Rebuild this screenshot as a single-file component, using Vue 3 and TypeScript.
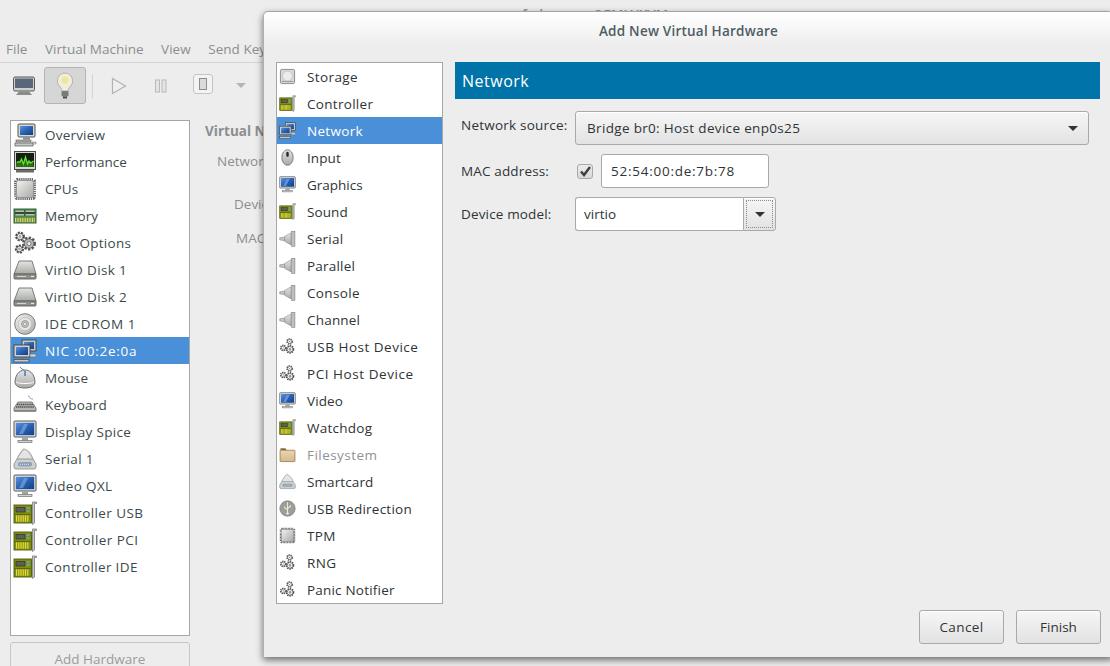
<script setup lang="ts">
interface Row { label: string; icon: string; selected?: boolean; disabled?: boolean; sp?: number }

const mainRows: Row[] = [
  { label: 'Overview', icon: 'pc', sp: 0.2 },
  { label: 'Performance', icon: 'perf', sp: 0 },
  { label: 'CPUs', icon: 'chip' },
  { label: 'Memory', icon: 'ram' },
  { label: 'Boot Options', icon: 'gears', sp: 0.25 },
  { label: 'VirtIO Disk 1', icon: 'disk', sp: 0.35 },
  { label: 'VirtIO Disk 2', icon: 'disk', sp: 0.35 },
  { label: 'IDE CDROM 1', icon: 'cd', sp: 0.55 },
  { label: 'NIC :00:2e:0a', icon: 'nic', selected: true, sp: 0.75 },
  { label: 'Mouse', icon: 'mouse' },
  { label: 'Keyboard', icon: 'kbd', sp: 0.2 },
  { label: 'Display Spice', icon: 'display', sp: 0.3 },
  { label: 'Serial 1', icon: 'serialport', sp: 0.35 },
  { label: 'Video QXL', icon: 'display', sp: 0.35 },
  { label: 'Controller USB', icon: 'card', sp: 0.4 },
  { label: 'Controller PCI', icon: 'card', sp: 0.45 },
  { label: 'Controller IDE', icon: 'card', sp: 0.35 },
]

const addRows: Row[] = [
  { label: 'Storage', icon: 'storage', sp: 0.4 },
  { label: 'Controller', icon: 'card', sp: 0.3 },
  { label: 'Network', icon: 'nic', selected: true, sp: 0.3 },
  { label: 'Input', icon: 'input' },
  { label: 'Graphics', icon: 'display', sp: 0 },
  { label: 'Sound', icon: 'card' },
  { label: 'Serial', icon: 'plug', sp: 0.25 },
  { label: 'Parallel', icon: 'plug', sp: 0.2 },
  { label: 'Console', icon: 'plug', sp: 0.35 },
  { label: 'Channel', icon: 'plug', sp: 0.2 },
  { label: 'USB Host Device', icon: 'gears2', sp: 0.5 },
  { label: 'PCI Host Device', icon: 'gears2', sp: 0.55 },
  { label: 'Video', icon: 'display' },
  { label: 'Watchdog', icon: 'card', sp: 0.25 },
  { label: 'Filesystem', icon: 'folder', disabled: true, sp: 0.45 },
  { label: 'Smartcard', icon: 'serialport' },
  { label: 'USB Redirection', icon: 'usb', sp: 0.25 },
  { label: 'TPM', icon: 'chip', sp: 0.4 },
  { label: 'RNG', icon: 'gears2', sp: 0.4 },
  { label: 'Panic Notifier', icon: 'gears2', sp: 0.2 },
]

const spacing = (r: Row) => ({ letterSpacing: `${r.sp ?? 0.1}px` })
</script>

<template>
  <div class="page">
    <svg class="sprites" aria-hidden="true">
      <defs>
        <linearGradient id="gBlue" x1="0" y1="0" x2="1" y2="1">
          <stop offset="0" stop-color="#5b93dc" />
          <stop offset="0.5" stop-color="#2a62b4" />
          <stop offset="1" stop-color="#12407f" />
        </linearGradient>
        <linearGradient id="gGrey" x1="0" y1="0" x2="1" y2="1">
          <stop offset="0" stop-color="#f2f2f0" />
          <stop offset="1" stop-color="#a9aaa6" />
        </linearGradient>
        <linearGradient id="gDisk" x1="0" y1="0" x2="0" y2="1">
          <stop offset="0" stop-color="#e4e5e2" />
          <stop offset="1" stop-color="#a8aaa6" />
        </linearGradient>
        <linearGradient id="gFolder" x1="0" y1="0" x2="0" y2="1">
          <stop offset="0" stop-color="#e9d6b6" />
          <stop offset="1" stop-color="#d5b98c" />
        </linearGradient>
        <symbol id="pc" viewBox="0 0 24 24">
          <rect x="5" y="1" width="17" height="13" rx="1" fill="#d8d9d6" stroke="#50534f" />
          <rect x="7" y="3" width="13" height="9" fill="url(#gBlue)" />
          <rect x="10" y="14.500" width="7" height="2" fill="#8a8c88" />
          <rect x="3" y="17" width="15" height="2" fill="#b5b6b2" stroke="#555" stroke-width=".6" />
          <rect x="2" y="20" width="18" height="3" fill="#c8c9c5" stroke="#555" stroke-width=".7" />
          <path d="M19 19h4v2h-3z" fill="#d5d5d2" stroke="#666" stroke-width=".5" />
        </symbol>
        <symbol id="perf" viewBox="0 0 24 24">
          <rect x="1.500" y="1.500" width="21" height="18" fill="#d5d6d3" stroke="#4a4c48" />
          <rect x="3" y="3" width="18" height="14" fill="#14200f" />
          <path d="M3 12h4l1.500-3 2 5 2-7 2 7 1.500-3 1.500 2 3-2v6H3z" fill="#2f6a1c" />
          <path d="M4 12h3l1.500-3 2 5 2-7 2 7 1.500-3 1.500 2 3-2" fill="none" stroke="#5ce62c" stroke-width="1.300" />
          <rect x="3" y="20" width="18" height="2.500" fill="#6a6c68" />
        </symbol>
        <symbol id="chip" viewBox="0 0 24 24">
          <rect x="3" y="3" width="18" height="18" rx="1" fill="none" stroke="#66686a" stroke-width="3.800" stroke-dasharray="1.300 .8" />
          <rect x="3.500" y="3.500" width="17" height="17" rx="2" fill="url(#gGrey)" stroke="#8b8d8e" stroke-width=".8" />
        </symbol>
        <symbol id="ram" viewBox="0 0 24 24">
          <rect x="1" y="5" width="22" height="14" fill="#4f8350" stroke="#39603c" />
          <rect x="2.500" y="6.500" width="19" height="5" fill="#b3c3ad" />
          <path d="M2 9h20" stroke="#2f4a33" stroke-width="2" />
          <rect x="11" y="6" width="1.500" height="6" fill="#3a5c3e" />
          <path d="M2 16h20" stroke="#e4d85a" stroke-width="4.500" stroke-dasharray="1 .7" />
        </symbol>
        <symbol id="gears" viewBox="0 0 24 24">
          <g stroke-linecap="butt">
            <circle cx="7" cy="5.500" r="3.600" fill="none" stroke="#4b4d4a" stroke-width="2.600" stroke-dasharray="1.900 1" />
            <circle cx="7" cy="5.500" r="3" fill="#fff" stroke="#4b4d4a" stroke-width=".8" />
            <circle cx="7" cy="5.500" r="1" fill="#fff" stroke="#6a6c69" stroke-width=".8" />
            <circle cx="6.500" cy="18" r="3.300" fill="none" stroke="#4b4d4a" stroke-width="2.600" stroke-dasharray="1.900 1" />
            <circle cx="6.500" cy="18" r="2.700" fill="#fff" stroke="#4b4d4a" stroke-width=".8" />
            <circle cx="6.500" cy="18" r=".9" fill="#fff" stroke="#6a6c69" stroke-width=".8" />
            <circle cx="16" cy="12.500" r="5.400" fill="none" stroke="#55575a" stroke-width="3.200" stroke-dasharray="2.200 1.300" />
            <circle cx="16" cy="12.500" r="4.800" fill="#b4b6b4" stroke="#55575a" stroke-width=".8" />
            <circle cx="16" cy="12.500" r="2" fill="#f4f4f2" stroke="#6a6c69" stroke-width=".8" />
          </g>
        </symbol>
        <symbol id="gears2" viewBox="0 0 24 24">
          <g>
            <circle cx="15" cy="5" r="3.500" fill="none" stroke="#5a5c59" stroke-width="2.400" stroke-dasharray="1.900 1" />
            <circle cx="15" cy="5" r="2.800" fill="#fff" stroke="#5a5c59" stroke-width=".9" />
            <circle cx="15" cy="5" r=".9" fill="#7a7c79" />
            <circle cx="6" cy="14" r="3.500" fill="none" stroke="#5a5c59" stroke-width="2.400" stroke-dasharray="1.900 1" />
            <circle cx="6" cy="14" r="2.800" fill="#fff" stroke="#5a5c59" stroke-width=".9" />
            <circle cx="6" cy="14" r=".9" fill="#7a7c79" />
            <circle cx="15.500" cy="16" r="4.800" fill="none" stroke="#4e504d" stroke-width="2.600" stroke-dasharray="2 1.100" />
            <circle cx="15.500" cy="16" r="3.900" fill="#fff" stroke="#4e504d" stroke-width=".9" />
            <circle cx="15.500" cy="16" r="1.500" fill="#a5a7a4" stroke="#5a5c59" stroke-width=".6" />
          </g>
        </symbol>
        <symbol id="disk" viewBox="0 0 24 24">
          <path d="M6 3h13l4 13H1z" fill="url(#gDisk)" stroke="#6d6f6b" stroke-width=".9" />
          <path d="M1 16h22v4a1 1 0 0 1-1 1H2a1 1 0 0 1-1-1z" fill="#8d8f8b" stroke="#5c5e5a" stroke-width=".9" />
          <path d="M4 18.500h9" stroke="#d4d5d2" />
          <path d="M18 18.500h3" stroke="#e9e9e7" />
        </symbol>
        <symbol id="storage" viewBox="0 0 24 24">
          <rect x="2" y="2" width="20" height="20" rx="2" fill="#d8d9d6" stroke="#8d8f8c" stroke-width="1.400" />
          <circle cx="12" cy="11.500" r="7" fill="#ecece9" stroke="#bdbebb" />
          <path d="M4 19h16" stroke="#9c9e9b" stroke-width="1.500" />
        </symbol>
        <symbol id="cd" viewBox="0 0 24 24">
          <circle cx="12" cy="12" r="10.300" fill="url(#gGrey)" stroke="#7a7c78" />
          <circle cx="12" cy="12" r="6.500" fill="#e7e7e5" stroke="#bdbebb" stroke-width=".7" />
          <circle cx="12" cy="12" r="3.500" fill="#c5c6c3" stroke="#8d8f8b" stroke-width=".8" />
          <circle cx="12" cy="12" r="1.500" fill="#fff" stroke="#787a76" stroke-width=".6" />
        </symbol>
        <symbol id="nic" viewBox="0 0 24 24">
          <rect x="9" y="1" width="14" height="11" fill="#c8c9c6" stroke="#3f4240" stroke-width=".9" />
          <rect x="11" y="3" width="10" height="7" fill="url(#gBlue)" />
          <rect x="1" y="6" width="16" height="12" fill="#d2d3d0" stroke="#3f4240" stroke-width=".9" />
          <rect x="3" y="8" width="12" height="8" fill="url(#gBlue)" />
          <rect x="6" y="18.500" width="6" height="1.500" fill="#777" />
          <rect x="1" y="20.500" width="15" height="2.500" fill="#c8c9c6" stroke="#444" stroke-width=".7" />
          <path d="M17 15h6v3h-6z" fill="#d2d3d0" stroke="#666" stroke-width=".6" />
        </symbol>
        <symbol id="mouse" viewBox="0 0 24 24">
          <path d="M7 1c1 2 3 2 5 4" fill="none" stroke="#75787a" />
          <path d="M12 4C5 4 2 11 2 16c0 4 4 6 10 6s10-2 10-6c0-5-3-12-10-12z" fill="url(#gDisk)" stroke="#6f716d" />
          <path d="M12 5v5" stroke="#4f8bd8" stroke-width="1.800" />
          <path d="M3 16c3 2 15 2 18 0" fill="none" stroke="#fff" />
        </symbol>
        <symbol id="kbd" viewBox="0 0 24 24">
          <path d="M15 3c3 0 0 3 5 3" fill="none" stroke="#9a9c98" />
          <path d="M5 9h14l4 6v3H1v-3z" fill="#b6b7b3" stroke="#676965" stroke-width=".8" />
          <path d="M4 11.500h16M3 14h18" stroke="#4e504c" stroke-width="1.400" stroke-dasharray="1.300 .6" />
          <path d="M1 18h22" stroke="#7c7e7a" stroke-width="1.400" />
        </symbol>
        <symbol id="display" viewBox="0 0 24 24">
          <rect x="1" y="1" width="22" height="16" rx="1" fill="#e2e3e0" stroke="#54575a" />
          <rect x="2.800" y="2.800" width="18.400" height="12.400" fill="url(#gBlue)" />
          <path d="M6 14l5-10h4l-5 10z" fill="#8cb4ea" opacity=".55" />
          <rect x="9" y="17.500" width="6" height="3" fill="#a3a4a1" />
          <rect x="5" y="20.500" width="14" height="2" fill="#d2d3d0" stroke="#5d5f5c" stroke-width=".6" />
        </symbol>
        <symbol id="serialport" viewBox="0 0 24 24">
          <path d="M4 12C6 8 8 4 11 2c4 1 7 5 9 10" fill="#e4e5e2" stroke="#a8aaa6" stroke-width="1.200" />
          <path d="M4 12h16l3 5v3a2 2 0 0 1-2 2H3a2 2 0 0 1-2-2v-3z" fill="#cfd0cd" stroke="#85878a" stroke-width=".8" />
          <rect x="5" y="15" width="14" height="4.500" rx="2" fill="#8ba2b8" />
          <path d="M7 17.300h10" stroke="#dde3ea" stroke-dasharray="1 1" />
        </symbol>
        <symbol id="card" viewBox="0 0 24 24">
          <rect x="1" y="4" width="17.500" height="18" fill="#7f8f12" stroke="#4f5a10" stroke-width=".9" />
          <rect x="3" y="6.500" width="9" height="4.500" fill="#5c5f5a" stroke="#262824" stroke-width=".6" />
          <path d="M13.500 7h3M13.500 10h3" stroke="#6fa8dc" stroke-width="1.500" />
          <path d="M3 17.500h13" stroke="#e8dd3e" stroke-width="6.500" stroke-dasharray="1 .8" />
          <path d="M1.500 13.500h16" stroke="#4f5a10" stroke-width=".8" />
          <path d="M19.500 1h4v1.500h-2V22l-2 1.500z" fill="#c6c7c4" stroke="#6e706c" stroke-width=".7" />
        </symbol>
        <symbol id="plug" viewBox="0 0 24 24">
          <path d="M1 11l7-1v5l-7-1z" fill="#c5c6c3" stroke="#7d7f7b" stroke-width=".7" />
          <path d="M8 9l9-5v17l-9-5z" fill="url(#gDisk)" stroke="#7d7f7b" stroke-width=".7" />
          <rect x="18" y="2" width="4.500" height="21" fill="#bfc0bd" stroke="#6e706c" stroke-width=".7" />
        </symbol>
        <symbol id="input" viewBox="0 0 24 24">
          <ellipse cx="12" cy="12" rx="8" ry="11" fill="url(#gDisk)" stroke="#555754" />
          <rect x="10.300" y="4" width="3.400" height="7" rx="1.500" fill="#26282a" />
        </symbol>
        <symbol id="folder" viewBox="0 0 24 24">
          <path d="M2 6V4a1 1 0 0 1 1-1h6l2 3z" fill="#8b6a35" />
          <rect x="1.500" y="6" width="21" height="16" rx="1" fill="url(#gFolder)" stroke="#8b6a35" />
        </symbol>
        <symbol id="usb" viewBox="0 0 24 24">
          <circle cx="12" cy="12" r="10.800" fill="#9c9e9a" stroke="#767874" />
          <path d="M12 3v16M12 14l-4-3V9M12 12l4-3V7" fill="none" stroke="#f0ead0" stroke-width="1.500" />
          <circle cx="12" cy="19" r="1.800" fill="#f0ead0" />
        </symbol>
      </defs>
    </svg>

    <!-- main window, behind the dialog -->
    <div class="main">
      <div class="titlebar">fedora on QEMU/KVM</div>
      <nav class="menu">
        <span>File</span><span>Virtual Machine</span><span>View</span><span>Send Key</span>
      </nav>
      <div class="toolbar">
        <div class="tool">
          <svg width="24" height="24" viewBox="0 0 24 24">
            <rect x="1.500" y="3" width="21" height="14" rx="1.500" fill="#cfd0cd" stroke="#55585b" />
            <rect x="3" y="4.500" width="18" height="9.500" fill="#59677a" />
            <path d="M4 21h16l-3-3.500H7z" fill="#8a8c87" />
          </svg>
        </div>
        <div class="tool tool-on">
          <svg width="22" height="30" viewBox="0 0 22 30">
            <path d="M11 2a8 8 0 0 0-5 14c1.500 1.500 2 3 2 4h6c0-1 .5-2.500 2-4a8 8 0 0 0-5-14z" fill="#eeeddf" stroke="#b2b3af" />
            <circle cx="11" cy="9" r="3.500" fill="#efe88f" />
            <rect x="7.500" y="20" width="7" height="5.500" rx="1" fill="#7a7c79" />
            <rect x="9" y="25.500" width="4" height="2" fill="#4b4c4a" />
          </svg>
        </div>
        <div class="tsep"></div>
        <div class="tool tool-play">
          <svg width="16" height="18" viewBox="0 0 16 18">
            <path d="M1.500 1.500v15l13-7.500z" fill="#efefed" stroke="#b2b4b1" stroke-width="1.200" />
          </svg>
        </div>
        <div class="tool tool-pause">
          <svg width="14" height="14" viewBox="0 0 14 14">
            <rect x="1.500" y="1" width="4" height="12" fill="#e4e4e2" stroke="#b9bab8" />
            <rect x="8" y="1" width="4" height="12" fill="#e4e4e2" stroke="#b9bab8" />
          </svg>
        </div>
        <div class="tool-stop">
          <svg width="8" height="12" viewBox="0 0 8 12">
            <rect x=".5" y=".5" width="7" height="11" fill="#dadad8" stroke="#8e8f8d" />
          </svg>
        </div>
        <span class="tool-arrow"></span>
      </div>

      <div class="workspace">
        <aside class="side">
          <ul class="list list-main">
            <li v-for="r in mainRows" :key="r.label" class="row" :class="{ sel: r.selected }" :style="spacing(r)">
              <svg class="ic-main"><use :href="'#' + r.icon" /></svg>
              <span>{{ r.label }}</span>
            </li>
          </ul>
          <div class="add-hw">Add Hardware</div>
        </aside>
        <section class="details">
          <h3>Virtual Network Interface</h3>
          <p class="d1">Network source:</p>
          <p class="d2">Device model:</p>
          <p class="d3">MAC address:</p>
        </section>
      </div>
      <div class="back-btns">
        <span>Remove</span><span class="dim">Cancel</span><span></span>
      </div>
    </div>

    <!-- dialog -->
    <div class="dialog">
      <header class="dlg-title">Add New Virtual Hardware</header>
      <div class="dlg-body">
        <ul class="list list-add">
          <li v-for="r in addRows" :key="r.label" class="row" :class="{ sel: r.selected, off: r.disabled }" :style="spacing(r)">
            <svg class="ic-add"><use :href="'#' + r.icon" /></svg>
            <span>{{ r.label }}</span>
          </li>
        </ul>
        <div class="panel">
          <div class="banner">Network</div>
          <div class="form">
            <label class="lab-top">Network source:</label>
            <div class="btn combo-wide">
              <span class="bridge">Bridge br0: Host device enp0s25</span>
              <i class="arrow"></i>
            </div>
            <label>MAC address:</label>
            <div class="mac">
              <span class="check">
                <svg width="13" height="13" viewBox="0 0 13 13">
                  <path d="M2 6.500l3 3.500 6-8" fill="none" stroke="#3a3f40" stroke-width="2.400" />
                </svg>
              </span>
              <div class="entry mac-entry">52:54:00:de:7b:78</div>
            </div>
            <label>Device model:</label>
            <div class="combo-entry">
              <div class="entry ce-text">virtio</div>
              <div class="btn ce-btn"><span class="focus"><i class="arrow"></i></span></div>
            </div>
          </div>
        </div>
      </div>
      <footer class="dlg-foot">
        <div class="btn foot-btn cancel">Cancel</div>
        <div class="btn foot-btn">Finish</div>
      </footer>
    </div>
  </div>
</template>

<style>
html, body { margin: 0; background: #ededed; overflow: hidden; }
</style>

<style scoped>
.page {
  position: relative;
  width: 1110px;
  height: 666px;
  overflow: hidden;
  background: #ededed;
  font-family: "Open Sans", "Noto Sans", sans-serif;
  font-size: 13.5px;
  color: #2e3436;
}
.sprites { position: absolute; width: 0; height: 0; }
ul { list-style: none; margin: 0; padding: 0; }

.main { height: 666px; display: flex; flex-direction: column; color: #8b8e8f; }
.titlebar { height: 36px; padding: 6px 0 0 522px; box-sizing: border-box; font-weight: 600; line-height: 18px; word-spacing: 2px; }
.menu {
  height: 27px;
  box-sizing: border-box;
  border-bottom: 1px solid #d4d4d4;
  display: flex;
  gap: 17.500px;
  padding: 3px 6px 0;
  line-height: 20px;
  white-space: nowrap;
  letter-spacing: .03px;
}
.toolbar { height: 41px; padding: 4px 0 0 10px; box-sizing: border-box; display: flex; align-items: flex-start; }
.tool { width: 28px; height: 37px; display: flex; align-items: center; justify-content: center; }
.tool-on {
  margin-left: 6px;
  background: #d6d6d6;
  border: 1px solid #b4b4b4;
  border-radius: 3px;
  box-sizing: border-box;
  width: 42px;
}
.tsep { width: 1px; height: 24px; background: #d4d4d4; margin: 7px 0 0 6px; }
.tool-play { margin-left: 12px; width: 28px; }
.tool-pause { margin-left: 14px; width: 28px; }
.tool-stop {
  margin: 7px 0 0 18px;
  width: 20px;
  height: 20px;
  box-sizing: border-box;
  border: 1px solid #c4c4c4;
  border-radius: 3px;
  background: #f3f3f3;
  display: flex;
  align-items: center;
  justify-content: center;
}
.tool-arrow {
  margin: 16px 0 0 23px;
  width: 0;
  height: 0;
  border-left: 5px solid transparent;
  border-right: 5px solid transparent;
  border-top: 5px solid #b5b5b5;
}
.workspace { height: 522px; padding: 16px 0 0 10px; box-sizing: border-box; display: flex; gap: 15px; }
.side { width: 180px; display: flex; flex-direction: column; gap: 6px; }
.list { background: #fff; border: 1px solid #a6a6a6; box-sizing: border-box; color: #3d4a4b; }
.list-main { height: 516px; flex: none; }
.row { height: 27px; display: flex; align-items: center; white-space: nowrap; }
.row.sel { background: #4a90d9; color: #fff; }
.row.off { color: #8f9395; }
.ic-main { width: 24px; height: 24px; margin: 0 8px 0 2px; flex: none; }
.add-hw {
  height: 34px;
  flex: none;
  box-sizing: border-box;
  border: 1px solid #c6c6c6;
  border-radius: 3px;
  text-align: center;
  line-height: 33px;
  color: #9a9c9d;
}
.details { flex: none; width: 500px; padding-top: 1px; white-space: nowrap; }
.details h3 { margin: 0; font-size: 13.5px; font-weight: 700; line-height: 20px; }
.details p { margin: 0; line-height: 20px; }
.d1 { padding: 10px 0 0 12px; }
.d2 { padding: 23px 0 0 29px; }
.d3 { padding: 14px 0 0 31px; }
.back-btns { display: flex; gap: 12px; padding-left: 905px; margin-top: -12px; color: #7d8081; line-height: 20px; text-align: center; }
.back-btns span { width: 84px; height: 30px; box-sizing: border-box; border: 1px solid #a9a9a9; border-radius: 3px; flex: none; }
.back-btns .dim { color: #b8b9b9; }

.dialog {
  position: absolute;
  left: 263px;
  top: 11px;
  width: 850px;
  height: 646px;
  box-sizing: border-box;
  background: #ededed;
  border-top: 1px solid #a5a5a5;
  border-left: 1px solid #b0b0b0;
  border-radius: 5px 5px 0 0;
  box-shadow: 0 3px 7px rgba(0, 0, 0, .55);
  display: flex;
  flex-direction: column;
  color: #2e3436;
}
.dlg-title {
  height: 50px;
  flex: none;
  box-sizing: border-box;
  padding-top: 9px;
  text-align: center;
  font-weight: 600;
  color: #4f5d63;
  line-height: 20px;
  letter-spacing: .22px;
  background: linear-gradient(#ffffff, #ededed 34px);
  border-radius: 5px 5px 0 0;
}
.dlg-body { display: flex; gap: 12px; padding-left: 12px; height: 542px; flex: none; }
.list-add { width: 167px; flex: none; height: 542px; color: #2e3436; }
.ic-add { width: 17px; height: 17px; margin: 0 11px 0 2px; flex: none; }
.list-add .row.off { color: #8f9395; }
.panel { width: 645px; flex: none; }
.banner {
  height: 37px;
  background: #0073a8;
  color: #fff;
  font-size: 16px;
  line-height: 39px;
  padding-left: 7px;
  letter-spacing: .5px;
}
.form {
  display: grid;
  grid-template-columns: 114px 514px;
  grid-auto-rows: 34px;
  row-gap: 9px;
  padding: 12px 0 0 6px;
  align-items: center;
}
.form label { letter-spacing: .15px; }
.form .lab-top { margin-top: -6px; letter-spacing: .22px; }
.btn {
  box-sizing: border-box;
  border: 1px solid #a9a9a9;
  border-radius: 3px;
  background: linear-gradient(#f6f6f6, #e2e2e2);
  box-shadow: inset 0 1px 0 #fff;
}
.combo-wide { height: 34px; display: flex; align-items: center; justify-content: space-between; padding: 0 10px 0 11px; }
.bridge { letter-spacing: .33px; }
.arrow {
  display: block;
  width: 0;
  height: 0;
  border-left: 5px solid transparent;
  border-right: 5px solid transparent;
  border-top: 5px solid #2e3436;
}
.mac { display: flex; align-items: center; }
.check {
  width: 16px;
  height: 15px;
  margin-left: 2px;
  box-sizing: border-box;
  border: 1px solid #a9a9a9;
  border-radius: 3px;
  background: linear-gradient(#ececec, #d8d8d8);
  display: flex;
  align-items: center;
  justify-content: center;
}
.entry {
  box-sizing: border-box;
  height: 34px;
  background: #fff;
  border: 1px solid #a9a9a9;
  line-height: 32px;
  color: #2e3436;
}
.mac-entry { width: 168px; margin-left: 8px; border-radius: 3px; padding-left: 9px; letter-spacing: .75px; }
.combo-entry { display: flex; width: 201px; }
.ce-text { width: 168px; border-radius: 3px 0 0 3px; border-right: 0; padding-left: 8px; }
.ce-btn { width: 33px; height: 34px; border-radius: 0 3px 3px 0; padding: 2px; }
.focus {
  width: 100%;
  height: 100%;
  box-sizing: border-box;
  border: 1px dotted #8a8a8a;
  display: flex;
  align-items: center;
  justify-content: center;
}
.dlg-foot { display: flex; gap: 12px; padding: 6px 0 0 655px; }
.foot-btn { width: 85px; height: 34px; text-align: center; line-height: 32px; }
.foot-btn.cancel { letter-spacing: .4px; }
</style>
